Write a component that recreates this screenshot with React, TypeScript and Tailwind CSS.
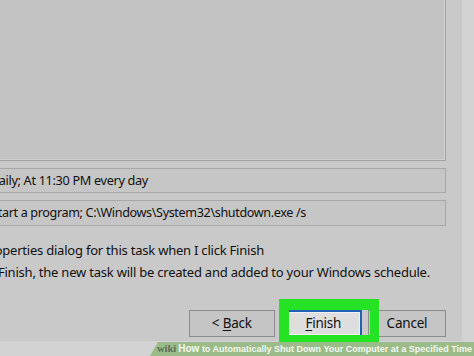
import React from "react";

const ui = { fontFamily: '"Noto Sans", "Open Sans", sans-serif' };

export default function App() {
  return (
    <div className="relative w-[474px] h-[356px] overflow-hidden bg-[#d3d3d3]" style={ui}>
      <div className="flex h-[341px]">
        {/* dialog */}
        <div className="w-[462px] h-full bg-[#c9c9c9] pr-[16px] flex flex-col text-[13px] tracking-[-0.22px] text-[#111]">
          <div className="h-[161px] bg-[#c3c3c3] border-r border-b border-[#a2a2a2] shadow-[inset_-1px_-1px_0_#cfcfcf]" />
          <div className="mt-[7px] h-[25px] border-y border-r border-[#a8a8a8] bg-[#c6c6c6] flex items-center">
            <div className="w-[148px] flex justify-end">
              <span className="whitespace-nowrap shrink-0 leading-none text-[12.7px] tracking-[-0.32px]">Daily; At 11:30 PM every day</span>
            </div>
          </div>
          <div className="mt-[7px] h-[26px] border-y border-r border-[#a8a8a8] bg-[#c6c6c6] flex items-center">
            <div className="w-[306px] flex justify-end">
              <span className="whitespace-nowrap shrink-0 leading-none text-[12.6px] tracking-[-0.36px]">Start a program; C:\Windows\System32\shutdown.exe /s</span>
            </div>
          </div>
          <div className="mt-[14px] h-[20px] flex items-center">
            <div className="w-[264px] flex justify-end">
              <span className="whitespace-nowrap shrink-0 leading-none">Open the Properties dialog for this task when I click Finish</span>
            </div>
          </div>
          <div className="mt-[2px] h-[20px] flex items-center">
            <div className="w-[430px] flex justify-end">
              <span className="whitespace-nowrap shrink-0 leading-none">When you click Finish, the new task will be created and added to your Windows schedule.</span>
            </div>
          </div>
          <div className="mt-[28px] h-[27px] flex text-[13.5px]">
            <div className="w-[189px] shrink-0" />
            <div className="w-[90px] h-full bg-[#c5c5c5] border border-[#8c8c8c] flex items-center justify-center">
              <span>&lt; <span className="underline underline-offset-2">B</span>ack</span>
            </div>
            <div className="ml-[10px] w-[81px] h-full bg-[#dedede] border-2 border-[#1f62b5] shadow-[inset_0_0_0_1px_#eef2f8] flex items-center justify-center">
              <span><span className="underline underline-offset-2">F</span>inish</span>
            </div>
            <div className="ml-[6px] w-[82px] h-full bg-[#c5c5c5] border border-[#8c8c8c] flex items-center justify-center">
              <span>Cancel</span>
            </div>
          </div>
        </div>
        <div className="flex-1" />
      </div>

      {/* green highlight */}
      <div className="absolute left-[279px] top-[299px] w-[100px] h-[48px] border-t-[11px] border-l-[10px] border-r-[9px] border-b-[12px] border-[#25e225]" />

      {/* wikiHow banner */}
      <div className="absolute right-0 bottom-0 w-[324px] h-[14px] bg-[#9bbb88] flex items-center pl-[7px] [clip-path:polygon(8px_0,100%_0,100%_100%,0_100%)]">
        <span
          className="text-[10.5px] font-bold text-[#5f6f57] leading-none"
          style={{ fontFamily: '"Liberation Serif", serif' }}
        >
          wiki
        </span>
        <span
          className="ml-[2px] text-[9px] font-bold text-[#f4f8f0] leading-none whitespace-nowrap"
          style={{ fontFamily: '"Liberation Sans", Arial, sans-serif' }}
        >
          <span className="text-[10px]">How</span> to Automatically Shut Down Your Computer at a Specified Time
        </span>
      </div>
    </div>
  );
}
